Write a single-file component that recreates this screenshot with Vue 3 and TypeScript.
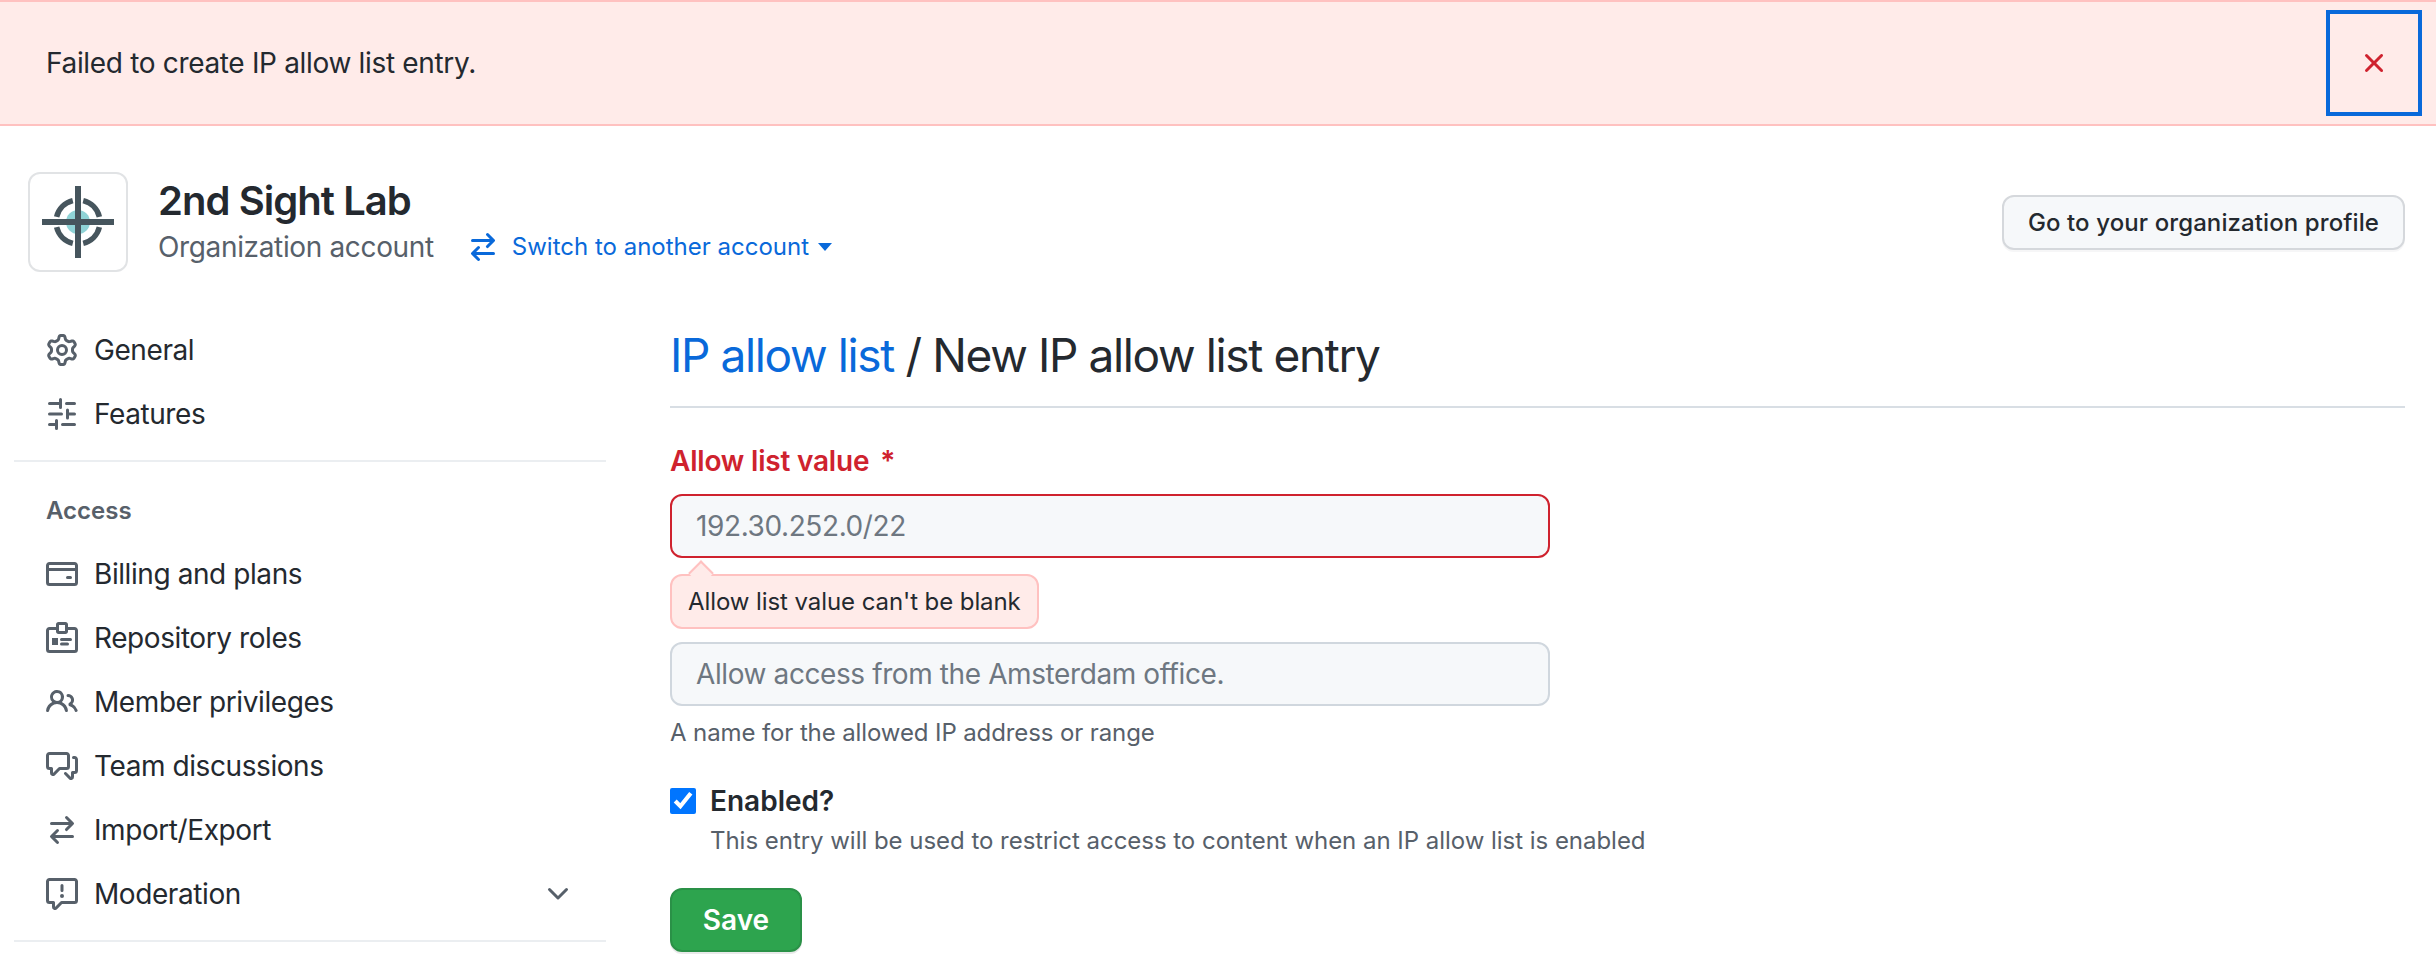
<script setup lang="ts">
interface NavItem {
  label: string
  paths: string
}

const icons = {
  gear: 'M8 0a8.2 8.2 0 0 1 .701.031C9.444.095 9.99.645 10.16 1.29l.288 1.107c.018.066.079.158.212.224.231.114.454.243.668.386.123.082.233.09.299.071l1.103-.303c.644-.176 1.392.021 1.82.63.27.385.506.792.704 1.218.315.675.111 1.422-.364 1.891l-.814.806c-.049.048-.098.147-.088.294.016.257.016.515 0 .772-.01.147.038.246.088.294l.814.806c.475.469.679 1.216.364 1.891a7.977 7.977 0 0 1-.704 1.217c-.428.61-1.176.807-1.82.63l-1.102-.302c-.067-.019-.177-.011-.3.071a5.909 5.909 0 0 1-.668.386c-.133.066-.194.158-.211.224l-.29 1.106c-.168.646-.715 1.196-1.458 1.26a8.006 8.006 0 0 1-1.402 0c-.743-.064-1.289-.614-1.458-1.26l-.289-1.106c-.018-.066-.079-.158-.212-.224a5.738 5.738 0 0 1-.668-.386c-.123-.082-.233-.09-.299-.071l-1.103.303c-.644.176-1.392-.021-1.82-.63a8.12 8.12 0 0 1-.704-1.218c-.315-.675-.111-1.422.363-1.891l.815-.806c.05-.048.098-.147.088-.294a6.214 6.214 0 0 1 0-.772c.01-.147-.038-.246-.088-.294l-.815-.806C.635 6.045.431 5.298.746 4.623a7.92 7.92 0 0 1 .704-1.217c.428-.61 1.176-.807 1.82-.63l1.102.302c.067.019.177.011.3-.071.214-.143.437-.272.668-.386.133-.066.194-.158.211-.224l.29-1.106C6.009.645 6.556.095 7.299.03 7.53.01 7.764 0 8 0Zm-.571 1.525c-.036.003-.108.036-.137.146l-.289 1.105c-.147.561-.549.967-.998 1.189-.173.086-.34.183-.5.29-.417.278-.97.423-1.529.27l-1.103-.303c-.109-.03-.175.016-.195.045-.22.312-.412.644-.573.99-.014.031-.021.11.059.19l.815.806c.411.406.562.957.53 1.456a4.709 4.709 0 0 0 0 .582c.032.499-.119 1.05-.53 1.456l-.815.806c-.081.08-.073.159-.059.19.162.346.353.677.573.989.02.03.085.076.195.046l1.102-.303c.56-.153 1.113-.008 1.53.27.161.107.328.204.501.29.447.222.85.629.997 1.189l.289 1.105c.029.109.101.143.137.146a6.6 6.6 0 0 0 1.142 0c.036-.003.108-.036.137-.146l.289-1.105c.147-.561.549-.967.998-1.189.173-.086.34-.183.5-.29.417-.278.97-.423 1.529-.27l1.103.303c.109.029.175-.016.195-.045.22-.313.411-.644.573-.99.014-.031.021-.11-.059-.19l-.815-.806c-.411-.406-.562-.957-.53-1.456a4.709 4.709 0 0 0 0-.582c-.032-.499.119-1.05.53-1.456l.815-.806c.081-.08.073-.159.059-.19a6.464 6.464 0 0 0-.573-.989c-.02-.03-.085-.076-.195-.046l-1.102.303c-.56.153-1.113.008-1.53-.27a4.44 4.44 0 0 0-.501-.29c-.447-.222-.85-.629-.997-1.189l-.289-1.105c-.029-.11-.101-.143-.137-.146a6.6 6.6 0 0 0-1.142 0ZM11 8a3 3 0 1 1-6 0 3 3 0 0 1 6 0ZM9.5 8a1.5 1.5 0 1 0-3.001.001A1.5 1.5 0 0 0 9.5 8Z',
  sliders: 'M15 2.75a.75.75 0 0 1-.75.75h-4a.75.75 0 0 1 0-1.5h4a.75.75 0 0 1 .75.75Zm-8.5.75v1.25a.75.75 0 0 0 1.5 0v-4a.75.75 0 0 0-1.5 0V2H1.75a.75.75 0 0 0 0 1.5H6.5Zm1.25 5.25a.75.75 0 0 0 0-1.5h-6a.75.75 0 0 0 0 1.5h6ZM15 8a.75.75 0 0 1-.75.75H11.5V10a.75.75 0 1 1-1.5 0V6a.75.75 0 0 1 1.5 0v1.25h2.75A.75.75 0 0 1 15 8Zm-9 5.25v-2a.75.75 0 0 0-1.5 0v1.25H1.75a.75.75 0 0 0 0 1.5H4.5v1.25a.75.75 0 0 0 1.5 0v-2Zm9 0a.75.75 0 0 1-.75.75h-6a.75.75 0 0 1 0-1.5h6a.75.75 0 0 1 .75.75Z',
  card: 'M10.75 9a.75.75 0 0 0 0 1.5h1.5a.75.75 0 0 0 0-1.5h-1.5Z M0 3.75C0 2.784.784 2 1.75 2h12.5c.966 0 1.75.784 1.75 1.75v8.5A1.75 1.75 0 0 1 14.25 14H1.75A1.75 1.75 0 0 1 0 12.25ZM14.5 6.5h-13v5.75c0 .138.112.25.25.25h12.5a.25.25 0 0 0 .25-.25Zm0-2.75a.25.25 0 0 0-.25-.25H1.75a.25.25 0 0 0-.25.25V5h13Z',
  badge: 'M6.25 0h3.5C10.44 0 11 .56 11 1.25V2.5h3.25C15.216 2.5 16 3.284 16 4.25v9.5A1.75 1.75 0 0 1 14.25 15.5H1.75A1.75 1.75 0 0 1 0 13.75v-9.5C0 3.284.784 2.5 1.75 2.5H5V1.25C5 .56 5.56 0 6.25 0ZM11 4v.75C11 5.44 10.44 6 9.75 6h-3.5C5.56 6 5 5.44 5 4.75V4H1.75a.25.25 0 0 0-.25.25v9.5c0 .138.112.25.25.25h12.5a.25.25 0 0 0 .25-.25v-9.5a.25.25 0 0 0-.25-.25ZM6.5 1.5v3h3v-3ZM3 8h3v3.5H3Zm4.75 0h4.5a.75.75 0 0 1 0 1.5h-4.5a.75.75 0 0 1 0-1.5Zm0 2.25h3a.75.75 0 0 1 0 1.5h-3a.75.75 0 0 1 0-1.5Z',
  people: 'M2 5.5a3.5 3.5 0 1 1 5.898 2.549 5.508 5.508 0 0 1 3.034 4.084.75.75 0 1 1-1.482.235 4 4 0 0 0-7.9 0 .75.75 0 0 1-1.482-.236A5.507 5.507 0 0 1 3.102 8.05 3.493 3.493 0 0 1 2 5.5ZM11 4a3.001 3.001 0 0 1 2.22 5.018 5.01 5.01 0 0 1 2.56 3.012.749.749 0 0 1-.885.954.752.752 0 0 1-.549-.514 3.507 3.507 0 0 0-2.522-2.372.75.75 0 0 1-.574-.73v-.352a.75.75 0 0 1 .416-.672A1.5 1.5 0 0 0 11 5.5.75.75 0 0 1 11 4Zm-5.5-.5a2 2 0 1 0-.001 3.999A2 2 0 0 0 5.5 3.5Z',
  discussion: 'M1.75 1h8.5c.966 0 1.75.784 1.75 1.75v5.5A1.75 1.75 0 0 1 10.25 10H7.061l-2.574 2.573A1.458 1.458 0 0 1 2 11.543V10h-.25A1.75 1.75 0 0 1 0 8.25v-5.5C0 1.784.784 1 1.75 1ZM1.5 2.75v5.5c0 .138.112.25.25.25h1a.75.75 0 0 1 .75.75v2.19l2.72-2.72a.749.749 0 0 1 .53-.22h3.5a.25.25 0 0 0 .25-.25v-5.5a.25.25 0 0 0-.25-.25h-8.5a.25.25 0 0 0-.25.25Zm13 2a.25.25 0 0 0-.25-.25h-.5a.75.75 0 0 1 0-1.5h.5c.966 0 1.75.784 1.75 1.75v5.5A1.75 1.75 0 0 1 14.25 12H14v1.543a1.458 1.458 0 0 1-2.487 1.03L9.22 12.28a.749.749 0 0 1 .326-1.275.749.749 0 0 1 .734.215l2.22 2.22v-2.19a.75.75 0 0 1 .75-.75h1a.25.25 0 0 0 .25-.25Z',
  arrows: 'M5.22 14.78a.75.75 0 0 0 1.06-1.06L4.56 12h8.69a.75.75 0 0 0 0-1.5H4.56l1.72-1.72a.75.75 0 0 0-1.06-1.06l-3 3a.75.75 0 0 0 0 1.06l3 3Zm5.56-6.5a.75.75 0 1 1-1.06-1.06l1.72-1.72H2.75a.75.75 0 0 1 0-1.5h8.69L9.72 2.28a.75.75 0 0 1 1.06-1.06l3 3a.75.75 0 0 1 0 1.06l-3 3Z',
  report: 'M0 1.75C0 .784.784 0 1.75 0h12.5C15.216 0 16 .784 16 1.75v9.5A1.75 1.75 0 0 1 14.25 13H8.06l-2.573 2.573A1.458 1.458 0 0 1 3 14.543V13H1.75A1.75 1.75 0 0 1 0 11.25Zm1.75-.25a.25.25 0 0 0-.25.25v9.5c0 .138.112.25.25.25h2a.75.75 0 0 1 .75.75v2.19l2.72-2.72a.749.749 0 0 1 .53-.22h6.5a.25.25 0 0 0 .25-.25v-9.5a.25.25 0 0 0-.25-.25Zm7 2.25v2.5a.75.75 0 0 1-1.5 0v-2.5a.75.75 0 0 1 1.5 0ZM9 9a1 1 0 1 1-2 0 1 1 0 0 1 2 0Z',
  close: 'M3.72 3.72a.75.75 0 0 1 1.06 0L8 6.94l3.22-3.22a.749.749 0 0 1 1.275.326.749.749 0 0 1-.215.734L9.06 8l3.22 3.22a.749.749 0 0 1-.326 1.275.749.749 0 0 1-.734-.215L8 9.06l-3.22 3.22a.751.751 0 0 1-1.042-.018.751.751 0 0 1-.018-1.042L6.94 8 3.72 4.78a.75.75 0 0 1 0-1.06Z',
  chevron: 'M12.78 5.22a.749.749 0 0 1 0 1.06l-4.25 4.25a.749.749 0 0 1-1.06 0L3.22 6.28a.749.749 0 1 1 1.06-1.06L8 8.939l3.72-3.719a.749.749 0 0 1 1.06 0Z'
}

const topItems: NavItem[] = [
  { label: 'General', paths: icons.gear },
  { label: 'Features', paths: icons.sliders }
]

const accessItems: NavItem[] = [
  { label: 'Billing and plans', paths: icons.card },
  { label: 'Repository roles', paths: icons.badge },
  { label: 'Member privileges', paths: icons.people },
  { label: 'Team discussions', paths: icons.discussion },
  { label: 'Import/Export', paths: icons.arrows }
]
</script>

<template>
  <div class="page">
    <div class="banner">
      <span>Failed to create IP allow list entry.</span>
      <button class="banner-close" type="button" aria-label="Dismiss">
        <svg class="icon" viewBox="0 0 16 16"><path :d="icons.close" /></svg>
      </button>
    </div>

    <header class="org-header">
      <div class="avatar">
        <svg viewBox="2 2 96 96" width="96" height="96">
          <circle cx="50" cy="50" r="12" fill="#8fd3d6" />
          <circle
            cx="50"
            cy="50"
            r="22"
            fill="none"
            stroke="#46555d"
            stroke-width="5.5"
            pathLength="360"
            stroke-dasharray="62 28"
            stroke-dashoffset="-14"
          />
          <path d="M47 14h6v72h-6z M14 47h72v6H14z" fill="#46555d" />
        </svg>
      </div>
      <div class="org-meta">
        <div class="org-name">2nd Sight Lab</div>
        <div class="org-sub">
          <span class="org-kind">Organization account</span>
          <a class="org-switch">
            <svg class="icon" viewBox="0 0 16 16"><path :d="icons.arrows" /></svg>
            <span>Switch to another account</span>
            <i class="caret"></i>
          </a>
        </div>
      </div>
      <button class="profile-btn" type="button">Go to your organization profile</button>
    </header>

    <div class="layout">
      <nav class="sidebar">
        <a v-for="item in topItems" :key="item.label" class="nav-row">
          <svg class="icon" viewBox="0 0 16 16"><path :d="item.paths" /></svg>
          <span>{{ item.label }}</span>
        </a>
        <hr class="nav-sep" />
        <div class="nav-heading">Access</div>
        <a v-for="item in accessItems" :key="item.label" class="nav-row">
          <svg class="icon" viewBox="0 0 16 16"><path :d="item.paths" /></svg>
          <span>{{ item.label }}</span>
        </a>
        <a class="nav-row">
          <svg class="icon" viewBox="0 0 16 16"><path :d="icons.report" /></svg>
          <span>Moderation</span>
          <svg class="icon chevron" viewBox="0 0 16 16"><path :d="icons.chevron" /></svg>
        </a>
        <hr class="nav-sep" />
      </nav>

      <main class="content">
        <h1 class="title"><a>IP allow list</a> / New IP allow list entry</h1>

        <form class="entry-form" @submit.prevent>
          <label class="field-label">Allow list value <span class="req">*</span></label>
          <input class="text-input invalid" type="text" placeholder="192.30.252.0/22" />
          <div class="field-error">Allow list value can't be blank</div>
          <input class="text-input second" type="text" placeholder="Allow access from the Amsterdam office." />
          <p class="field-note">A name for the allowed IP address or range</p>

          <label class="check-row">
            <input type="checkbox" checked />
            <span>Enabled?</span>
          </label>
          <p class="check-note">This entry will be used to restrict access to content when an IP allow list is enabled</p>

          <button class="save-btn" type="submit">Save</button>
        </form>
      </main>
    </div>
  </div>
</template>

<style>
html,
body {
  background: #fff;
}
</style>

<style scoped>
.page {
  font-family: Inter, "Liberation Sans", sans-serif;
  font-size: 28px;
  color: #24292f;
  height: 980px;
  overflow: hidden;
}
.icon {
  width: 32px;
  height: 32px;
  flex: none;
  fill: currentColor;
}

.banner {
  height: 126px;
  box-sizing: border-box;
  padding: 0 14px 0 46px;
  display: flex;
  align-items: center;
  justify-content: space-between;
  background: #ffebe9;
  border-top: 2px solid #ffc1c0;
  border-bottom: 2px solid #ffc1c0;
  letter-spacing: -0.33px;
}
.banner-close {
  width: 96px;
  height: 106px;
  padding: 0;
  background: none;
  border: 4px solid #0969da;
  color: #cf222e;
  display: flex;
  align-items: center;
  justify-content: center;
}

.org-header {
  margin-top: 46px;
  padding: 0 31px 0 28px;
  height: 100px;
  display: flex;
  align-items: center;
}
.avatar {
  width: 100px;
  height: 100px;
  box-sizing: border-box;
  border: 2px solid #e1e3e5;
  border-radius: 12px;
  display: flex;
  align-items: center;
  justify-content: center;
}
.org-meta {
  margin-left: 30px;
  padding-bottom: 3px;
  flex: 1;
}
.org-name {
  font-size: 40px;
  line-height: 50px;
  font-weight: 600;
  letter-spacing: -0.95px;
}
.org-sub {
  margin-top: 3px;
  display: flex;
  align-items: center;
  line-height: 36px;
}
.org-kind {
  color: #57606a;
  letter-spacing: -0.35px;
}
.org-switch {
  margin-left: 33px;
  display: flex;
  align-items: center;
  color: #0969da;
  font-size: 24px;
}
.org-switch .icon {
  margin-right: 13px;
}
.caret {
  margin-left: 9px;
  border-style: solid;
  border-width: 8px 7px 0;
  border-color: #0969da transparent transparent;
}
.profile-btn {
  height: 55px;
  width: 403px;
  padding: 0;
  font: 500 24px Inter, "Liberation Sans", sans-serif;
  letter-spacing: 0.1px;
  color: #24292f;
  background: #f6f8fa;
  border: 2px solid #d5d8dc;
  border-radius: 12px;
  box-shadow: 0 2px 0 rgba(31, 35, 40, 0.04);
}

.layout {
  display: grid;
  grid-template-columns: 592px 1fr;
  column-gap: 64px;
  padding: 0 31px 0 14px;
}
.sidebar {
  padding-top: 46px;
}
.nav-row {
  height: 64px;
  padding: 0 32px;
  display: flex;
  align-items: center;
  gap: 16px;
  color: #24292f;
  letter-spacing: -0.42px;
}
.nav-row .icon {
  color: #57606a;
}
.nav-row .chevron {
  margin-left: auto;
}
.nav-sep {
  margin: 14px 0;
  height: 2px;
  border: 0;
  background: #ebeef1;
}
.nav-heading {
  padding: 20px 32px 16px;
  font-size: 24px;
  line-height: 30px;
  font-weight: 600;
  color: #57606a;
}

.content {
  padding-top: 53px;
}
.title {
  margin: 0;
  padding-bottom: 21px;
  font-size: 46px;
  line-height: 60px;
  font-weight: 400;
  letter-spacing: -1.37px;
  border-bottom: 2px solid #d8dee4;
}
.title a {
  color: #0969da;
}
.entry-form {
  padding-top: 35px;
}
.field-label {
  display: block;
  line-height: 36px;
  font-weight: 600;
  letter-spacing: -0.2px;
  color: #cf222e;
}
.req {
  margin-left: 4px;
}
.text-input {
  display: block;
  width: 880px;
  height: 64px;
  box-sizing: border-box;
  margin-top: 15px;
  padding: 0 24px;
  font: 28px Inter, "Liberation Sans", sans-serif;
  letter-spacing: -0.4px;
  color: #24292f;
  background: #f6f8fa;
  border: 2px solid #d0d7de;
  border-radius: 12px;
  outline: none;
}
.text-input::placeholder {
  color: #6e7781;
  opacity: 1;
}
.text-input.invalid {
  border-color: #cf222e;
}
.text-input.second {
  margin-top: 13px;
}
.field-error {
  position: relative;
  width: fit-content;
  margin-top: 16px;
  height: 55px;
  box-sizing: border-box;
  padding: 0 16px;
  display: flex;
  align-items: center;
  font-size: 24px;
  letter-spacing: -0.08px;
  background: #ffebe9;
  border: 2px solid #ffc1c0;
  border-radius: 12px;
}
.field-error::before {
  content: "";
  position: absolute;
  left: 20px;
  top: -12px;
  width: 16px;
  height: 16px;
  background: #ffebe9;
  border-top: 2px solid #ffc1c0;
  border-left: 2px solid #ffc1c0;
  transform: rotate(45deg);
}
.field-note {
  margin: 9px 0 0;
  line-height: 36px;
  font-size: 24px;
  letter-spacing: -0.11px;
  color: #57606a;
}
.check-row {
  margin-top: 32px;
  display: flex;
  align-items: center;
  gap: 14px;
  line-height: 36px;
  font-weight: 600;
}
.check-row input {
  width: 26px;
  height: 26px;
  margin: 0;
}
.check-note {
  margin: 4px 0 0 40px;
  line-height: 36px;
  font-size: 24px;
  letter-spacing: -0.03px;
  color: #57606a;
}
.save-btn {
  display: block;
  margin-top: 29px;
  width: 132px;
  height: 64px;
  padding: 0;
  font: 600 28px Inter, "Liberation Sans", sans-serif;
  color: #fff;
  background: #2da44e;
  border: 2px solid #2a9147;
  border-radius: 12px;
  box-shadow: 0 2px 0 rgba(31, 35, 40, 0.1);
}
</style>
